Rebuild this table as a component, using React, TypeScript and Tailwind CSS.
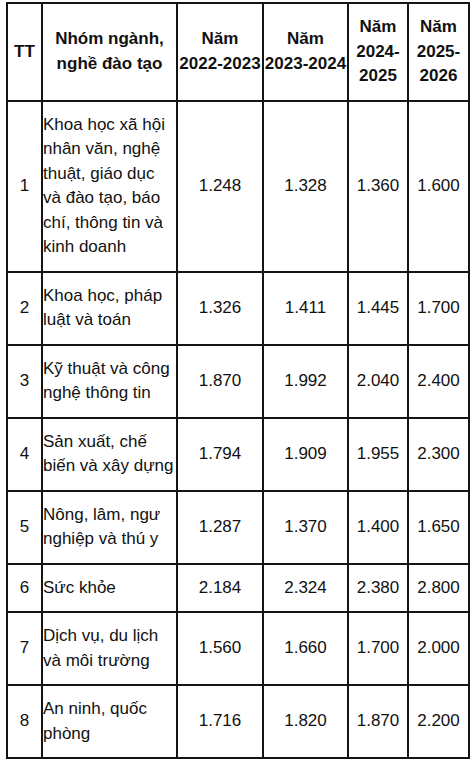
const rows = [
  { tt: "1", name: ["Khoa học xã hội", "nhân văn, nghệ", "thuật, giáo dục", "và đào tạo, báo", "chí, thông tin và", "kinh doanh"], v: ["1.248", "1.328", "1.360", "1.600"] },
  { tt: "2", name: ["Khoa học, pháp", "luật và toán"], v: ["1.326", "1.411", "1.445", "1.700"] },
  { tt: "3", name: ["Kỹ thuật và công", "nghệ thông tin"], v: ["1.870", "1.992", "2.040", "2.400"] },
  { tt: "4", name: ["Sản xuất, chế", "biến và xây dựng"], v: ["1.794", "1.909", "1.955", "2.300"] },
  { tt: "5", name: ["Nông, lâm, ngư", "nghiệp và thú y"], v: ["1.287", "1.370", "1.400", "1.650"] },
  { tt: "6", name: ["Sức khỏe"], v: ["2.184", "2.324", "2.380", "2.800"] },
  { tt: "7", name: ["Dịch vụ, du lịch", "và môi trường"], v: ["1.560", "1.660", "1.700", "2.000"] },
  { tt: "8", name: ["An ninh, quốc", "phòng"], v: ["1.716", "1.820", "1.870", "2.200"] },
];

const headers = [
  ["Năm", "2022-2023"],
  ["Năm", "2023-2024"],
  ["Năm", "2024-", "2025"],
  ["Năm", "2025-", "2026"],
];

const cell = "border-2 border-[#141414] py-[11px] align-middle";

export default function App() {
  return (
    <div className="min-h-screen bg-white pt-[2px] pl-[6px] text-[17px] leading-[24.5px] text-[#111] font-['Liberation_Sans',Arial,sans-serif]">
      <table className="table-fixed border-collapse w-[462px]">
        <colgroup>
          <col className="w-[35px]" />
          <col className="w-[135px]" />
          <col className="w-[86px]" />
          <col className="w-[85px]" />
          <col className="w-[60px]" />
          <col className="w-[61px]" />
        </colgroup>
        <thead>
          <tr className="font-bold">
            <th className={`${cell} text-center`}>TT</th>
            <th className={`${cell} text-center`}>
              <div>Nhóm ngành,</div>
              <div>nghề đào tạo</div>
            </th>
            {headers.map((h, i) => (
              <th key={i} className={`${cell} text-center px-0`}>
                {h.map((l) => (
                  <div key={l} className="whitespace-nowrap">{l}</div>
                ))}
              </th>
            ))}
          </tr>
        </thead>
        <tbody>
          {rows.map((r) => (
            <tr key={r.tt}>
              <td className={`${cell} text-center`}>{r.tt}</td>
              <td className={`${cell} text-left pl-0 pr-0`}>
                {r.name.map((l) => (
                  <div key={l} className="whitespace-nowrap">{l}</div>
                ))}
              </td>
              {r.v.map((v, i) => (
                <td key={i} className={`${cell} text-center`}>{v}</td>
              ))}
            </tr>
          ))}
        </tbody>
      </table>
    </div>
  );
}
